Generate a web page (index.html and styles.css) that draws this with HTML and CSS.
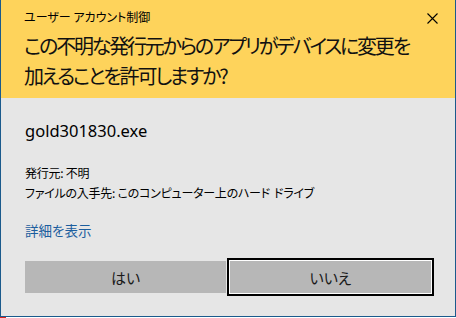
FILE: index.html
```html
<!DOCTYPE html>
<html lang="ja">
<head>
<meta charset="utf-8">
<title>ユーザー アカウント制御</title>
<link rel="stylesheet" href="styles.css">
</head>
<body>
<div class="dialog">
  <div class="header">
    <div class="titlebar">
      <span class="title">ユーザー アカウント制御</span>
      <svg class="close" width="11" height="11" viewBox="0 0 11 11"><path d="M0.5 0.5 L10.5 10.5 M10.5 0.5 L0.5 10.5" stroke="#000" stroke-width="1.1" fill="none"/></svg>
    </div>
    <div class="question">この不明な発行元からのアプリがデバイスに変更を<br>加えることを許可しますか?</div>
  </div>
  <div class="content">
    <div class="program">gold301830.exe</div>
    <div class="info">
      <div>発行元: 不明</div>
      <div>ファイルの入手先: このコンピューター上のハード<span class="gap"> </span>ドライブ</div>
    </div>
    <div class="details">詳細を表示</div>
    <div class="buttons">
      <div class="btn">はい</div>
      <div class="btn focused">いいえ</div>
    </div>
  </div>
</div>
<div class="taskbar-peek"></div>
</body>
</html>
```

FILE: styles.css
```css
html, body {
  margin: 0;
  padding: 0;
  background: #ffffff;
}
body {
  width: 456px;
  height: 318px;
  position: relative;
  overflow: hidden;
  font-family: "Noto Sans CJK JP", "Noto Sans", sans-serif;
  font-feature-settings: "palt";
  color: #000;
}
.dialog {
  width: 456px;
  height: 317px;
  box-sizing: border-box;
  border: 1px solid #1b5a8c;
  border-top: none;
  display: flex;
  flex-direction: column;
  background: #e6e6e6;
}
.header {
  background: #fed35b;
  height: 98px;
  box-sizing: border-box;
  padding: 8px 0 0 23px;
}
.titlebar {
  display: flex;
  align-items: center;
  justify-content: space-between;
  height: 18px;
  padding-right: 17px;
}
.title {
  font-size: 12px;
  line-height: 18px;
}
.close {
  display: block;
  margin-top: 2px;
}
.question {
  margin-top: 5px;
  font-size: 20px;
  line-height: 30px;
  letter-spacing: -2.2px;
  white-space: nowrap;
  color: #111;
}
.content {
  flex: 1;
  display: flex;
  flex-direction: column;
  padding: 0 24px;
}
.program {
  margin-top: 22px;
  font-family: "Noto Sans", "Open Sans", sans-serif;
  font-size: 16.5px;
  line-height: 22px;
}
.info {
  margin-top: 21px;
  font-size: 12px;
  line-height: 20px;
  letter-spacing: -0.25px;
}
.gap {
  display: inline-block;
  width: 4px;
}
.details {
  margin-top: 17px;
  font-size: 13.5px;
  line-height: 20px;
  color: #1c5e9e;
}
.buttons {
  margin-top: 21px;
  display: flex;
  gap: 4px;
}
.btn {
  flex: 1;
  height: 32px;
  background: #b7b7b7;
  display: flex;
  align-items: center;
  justify-content: center;
  font-size: 15px;
  color: #1a1a1a;
}
.btn.focused {
  box-shadow: 0 0 0 1px #ffffff, 0 0 0 3px #000000;
}
.taskbar-peek {
  position: absolute;
  left: 0;
  top: 317px;
  width: 6px;
  height: 1px;
  background: #d9251c;
}
```
